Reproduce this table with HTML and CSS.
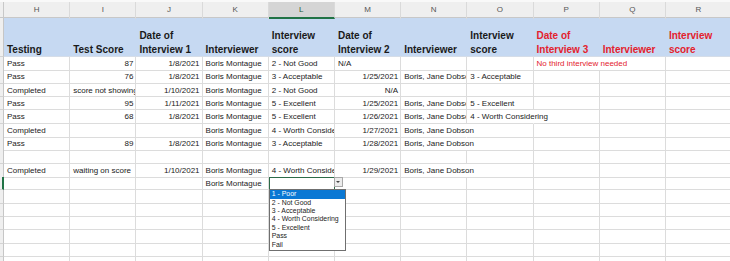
FILE: index.html
```html
<!DOCTYPE html>
<html>
<head>
<meta charset="utf-8">
<link rel="stylesheet" href="styles.css">
</head>
<body>
<div class="sheet">
  <div class="row colhdr">
    <div class="corner"></div>
    <div class="ch">H</div><div class="ch">I</div><div class="ch">J</div><div class="ch">K</div>
    <div class="ch sel">L</div><div class="ch">M</div><div class="ch">N</div><div class="ch">O</div>
    <div class="ch">P</div><div class="ch">Q</div><div class="ch">R</div>
  </div>
  <div class="row hdr">
    <div class="rh"></div>
    <div class="hc"><span>Testing</span></div>
    <div class="hc"><span>Test Score</span></div>
    <div class="hc"><span>Date of<br>Interview 1</span></div>
    <div class="hc"><span>Interviewer</span></div>
    <div class="hc"><span>Interview<br>score</span></div>
    <div class="hc"><span>Date of<br>Interview 2</span></div>
    <div class="hc"><span>Interviewer</span></div>
    <div class="hc"><span>Interview<br>score</span></div>
    <div class="hc red"><span>Date of<br>Interview 3</span></div>
    <div class="hc red"><span>Interviewer</span></div>
    <div class="hc red"><span>Interview<br>score</span></div>
  </div>

  <div class="row data">
    <div class="rh"></div>
    <div class="c">Pass</div><div class="c n">87</div><div class="c n">1/8/2021</div><div class="c">Boris Montague</div>
    <div class="c">2 - Not Good</div><div class="c">N/A</div><div class="c"></div><div class="c"></div>
    <div class="c spill redtext">No third interview needed</div><div class="c"></div><div class="c"></div>
  </div>
  <div class="row data">
    <div class="rh"></div>
    <div class="c">Pass</div><div class="c n">76</div><div class="c n">1/8/2021</div><div class="c">Boris Montague</div>
    <div class="c">3 - Acceptable</div><div class="c n">1/25/2021</div><div class="c">Boris, Jane Dobson</div><div class="c">3 - Acceptable</div>
    <div class="c"></div><div class="c"></div><div class="c"></div>
  </div>
  <div class="row data">
    <div class="rh"></div>
    <div class="c">Completed</div><div class="c">score not showing</div><div class="c n">1/10/2021</div><div class="c">Boris Montague</div>
    <div class="c">2 - Not Good</div><div class="c n">N/A</div><div class="c"></div><div class="c"></div>
    <div class="c"></div><div class="c"></div><div class="c"></div>
  </div>
  <div class="row data">
    <div class="rh"></div>
    <div class="c">Pass</div><div class="c n">95</div><div class="c n">1/11/2021</div><div class="c">Boris Montague</div>
    <div class="c">5 - Excellent</div><div class="c n">1/25/2021</div><div class="c">Boris, Jane Dobson</div><div class="c">5 - Excellent</div>
    <div class="c"></div><div class="c"></div><div class="c"></div>
  </div>
  <div class="row data">
    <div class="rh"></div>
    <div class="c">Pass</div><div class="c n">68</div><div class="c n">1/8/2021</div><div class="c">Boris Montague</div>
    <div class="c">5 - Excellent</div><div class="c n">1/26/2021</div><div class="c">Boris, Jane Dobson</div><div class="c spill">4 - Worth Considering</div>
    <div class="c"></div><div class="c"></div><div class="c"></div>
  </div>
  <div class="row data">
    <div class="rh"></div>
    <div class="c">Completed</div><div class="c"></div><div class="c"></div><div class="c">Boris Montague</div>
    <div class="c">4 - Worth Considering</div><div class="c n">1/27/2021</div><div class="c spill">Boris, Jane Dobson</div><div class="c"></div>
    <div class="c"></div><div class="c"></div><div class="c"></div>
  </div>
  <div class="row data">
    <div class="rh"></div>
    <div class="c">Pass</div><div class="c n">89</div><div class="c n">1/8/2021</div><div class="c">Boris Montague</div>
    <div class="c">3 - Acceptable</div><div class="c n">1/28/2021</div><div class="c spill">Boris, Jane Dobson</div><div class="c"></div>
    <div class="c"></div><div class="c"></div><div class="c"></div>
  </div>
  <div class="row data">
    <div class="rh"></div>
    <div class="c"></div><div class="c"></div><div class="c"></div><div class="c"></div>
    <div class="c"></div><div class="c"></div><div class="c"></div><div class="c"></div>
    <div class="c"></div><div class="c"></div><div class="c"></div>
  </div>
  <div class="row data">
    <div class="rh"></div>
    <div class="c">Completed</div><div class="c">waiting on score</div><div class="c n">1/10/2021</div><div class="c">Boris Montague</div>
    <div class="c">4 - Worth Considering</div><div class="c n">1/29/2021</div><div class="c spill">Boris, Jane Dobson</div><div class="c"></div>
    <div class="c"></div><div class="c"></div><div class="c"></div>
  </div>
  <div class="row data">
    <div class="rh act"></div>
    <div class="c"></div><div class="c"></div><div class="c"></div><div class="c">Boris Montague</div>
    <div class="c active">
      <div class="dd-btn"><span class="arrow"></span></div>
      <ul class="dd-list">
        <li class="hl">1 - Poor</li>
        <li>2 - Not Good</li>
        <li>3 - Acceptable</li>
        <li>4 - Worth Considering</li>
        <li>5 - Excellent</li>
        <li>Pass</li>
        <li>Fail</li>
      </ul>
    </div>
    <div class="c"></div><div class="c"></div><div class="c"></div>
    <div class="c"></div><div class="c"></div><div class="c"></div>
  </div>
  <div class="row data"><div class="rh"></div><div class="c"></div><div class="c"></div><div class="c"></div><div class="c"></div><div class="c"></div><div class="c"></div><div class="c"></div><div class="c"></div><div class="c"></div><div class="c"></div><div class="c"></div></div>
  <div class="row data"><div class="rh"></div><div class="c"></div><div class="c"></div><div class="c"></div><div class="c"></div><div class="c"></div><div class="c"></div><div class="c"></div><div class="c"></div><div class="c"></div><div class="c"></div><div class="c"></div></div>
  <div class="row data"><div class="rh"></div><div class="c"></div><div class="c"></div><div class="c"></div><div class="c"></div><div class="c"></div><div class="c"></div><div class="c"></div><div class="c"></div><div class="c"></div><div class="c"></div><div class="c"></div></div>
  <div class="row data"><div class="rh"></div><div class="c"></div><div class="c"></div><div class="c"></div><div class="c"></div><div class="c"></div><div class="c"></div><div class="c"></div><div class="c"></div><div class="c"></div><div class="c"></div><div class="c"></div></div>
  <div class="row data"><div class="rh"></div><div class="c"></div><div class="c"></div><div class="c"></div><div class="c"></div><div class="c"></div><div class="c"></div><div class="c"></div><div class="c"></div><div class="c"></div><div class="c"></div><div class="c"></div></div>
  <div class="row data"><div class="rh"></div><div class="c"></div><div class="c"></div><div class="c"></div><div class="c"></div><div class="c"></div><div class="c"></div><div class="c"></div><div class="c"></div><div class="c"></div><div class="c"></div><div class="c"></div></div>
</div>
</body>
</html>
```
FILE: styles.css
```css
html, body {
  margin: 0;
  padding: 0;
  background: #ffffff;
  overflow: hidden;
}
body {
  width: 730px;
  height: 261px;
  font-family: "Liberation Sans", Arial, sans-serif;
  color: #222222;
}
.sheet {
  width: 740px;
}
.row {
  display: grid;
  grid-template-columns: 4px repeat(11, 66.2px);
}
.row > div {
  box-sizing: border-box;
}

/* column letters */
.colhdr {
  height: 18px;
  background: #efefef;
  border-top: 2px solid #f9f9f9;
  border-bottom: 1px solid #c8c8c8;
  box-sizing: border-box;
}
.corner {
  border-right: 1px solid #c8c8c8;
}
.ch {
  font-size: 8px;
  line-height: 15px;
  text-align: center;
  color: #555555;
  border-right: 1px solid #dadada;
}
.ch.sel {
  background: #d5d5d5;
  color: #1f5a38;
  border-bottom: 2px solid #217346;
}

/* header row */
.hdr {
  height: 39px;
  background: #c6d9f2;
}
.rh {
  background: #efefef;
  border-right: 1px solid #c6c6c6;
  border-bottom: 1px solid #d3d3d3;
}
.rh.act {
  border-right: 2px solid #217346;
}
.hc {
  display: flex;
  align-items: flex-end;
  padding: 0 2px 0 3px;
  font-size: 10px;
  font-weight: bold;
  line-height: 13.3px;
  color: #1a1a1a;
  white-space: nowrap;
  border-bottom: 1px solid #d5dde8;
}
.hc.red {
  color: #e3212d;
}

/* data rows */
.data {
  height: 13.333px;
}
.c {
  font-size: 8px;
  line-height: 13px;
  padding: 0 2px 0 3px;
  white-space: nowrap;
  overflow: hidden;
  border-right: 1px solid #dcdcdc;
  border-bottom: 1px solid #dcdcdc;
}
.c.n {
  text-align: right;
  padding: 0 2px 0 2px;
}
.c.spill {
  overflow: visible;
  border-right-color: transparent;
  z-index: 1;
}
.redtext {
  color: #e3212d;
}

/* active cell with validation dropdown */
.c.active {
  position: relative;
  overflow: visible;
  outline: 1px solid #2c6b48;
  outline-offset: -1px;
  z-index: 3;
}
.dd-btn {
  position: absolute;
  left: 100%;
  top: 0;
  width: 9px;
  height: 10px;
  box-sizing: border-box;
  background: #ececec;
  border: 1px solid #a8a8a8;
  display: flex;
  align-items: center;
  justify-content: center;
}
.arrow {
  width: 0;
  height: 0;
  border-left: 2px solid transparent;
  border-right: 2px solid transparent;
  border-top: 2px solid #444444;
}
.dd-list {
  position: absolute;
  left: 0;
  top: 100%;
  width: 77px;
  margin: 0;
  padding: 0 0 1px 0;
  list-style: none;
  background: #ffffff;
  border: 1px solid #6f6f6f;
  box-sizing: border-box;
}
.dd-list li {
  font-size: 6.9px;
  line-height: 8.4px;
  height: 8.4px;
  padding: 0 0 0 2px;
  color: #222222;
  white-space: nowrap;
}
.dd-list li.hl {
  background: #0a78d4;
  color: #ffffff;
}
```
